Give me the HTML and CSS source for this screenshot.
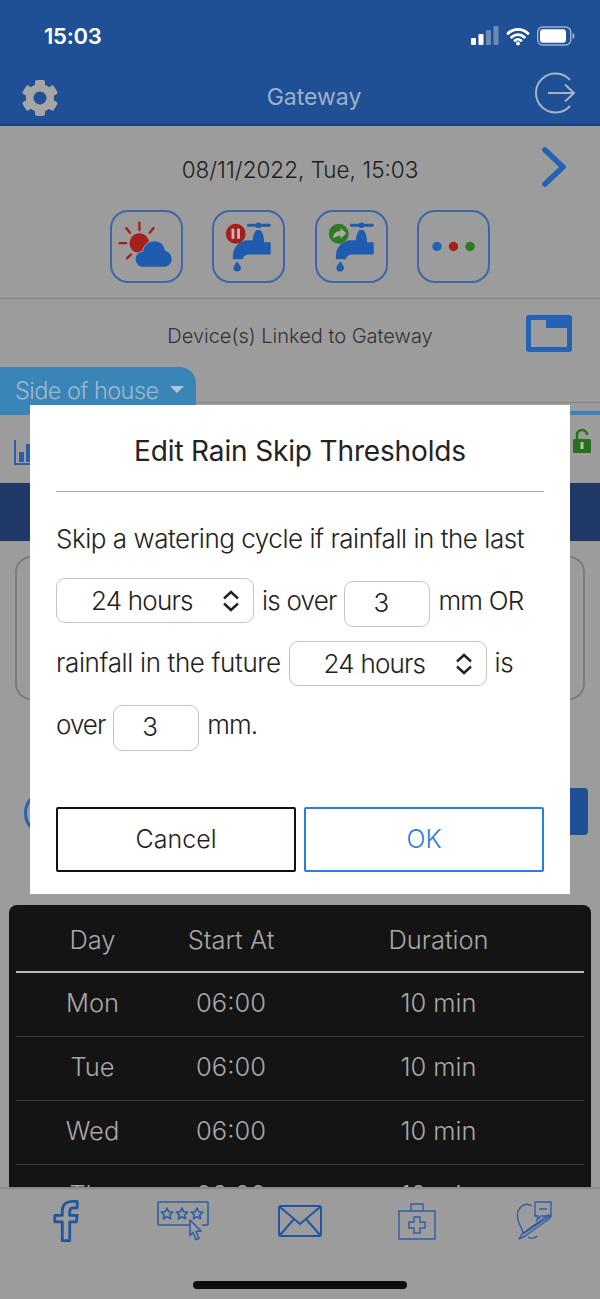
FILE: index.html
```html
<!DOCTYPE html>
<html lang="en">
<head>
    <meta charset="UTF-8">
    <meta name="viewport" content="width=device-width, initial-scale=1.0">
    <title>Gateway</title>
    <link rel="stylesheet" href="styles.css">
</head>
<body>
<div class="phone">
    <header class="app-header">
        <div class="status-bar">
            <span class="clock">15:03</span>
            <div class="status-icons">
                <svg width="28" height="20" viewBox="0 0 28 20">
                    <rect x="0" y="12" width="5" height="7" rx="1" fill="#fff"/>
                    <rect x="7.5" y="8" width="5" height="11" rx="1" fill="#fff"/>
                    <rect x="15" y="4" width="5" height="15" rx="1" fill="#6c8ab8"/>
                    <rect x="22.5" y="0" width="5" height="19" rx="1" fill="#6c8ab8"/>
                </svg>
                <svg width="24" height="20" viewBox="0 0 24 20">
                    <path d="M2 7.5a14 14 0 0 1 20 0M5.6 11.2a9 9 0 0 1 12.8 0M9 14.6a4.300 4.300 0 0 1 6 0" fill="none" stroke="#fff" stroke-width="2.800" stroke-linecap="round"/>
                    <circle cx="12" cy="17.500" r="2" fill="#fff"/>
                </svg>
                <svg width="38" height="20" viewBox="0 0 38 20">
                    <rect x="0.700" y="1" width="33" height="18" rx="5" fill="none" stroke="#9fb4d2" stroke-width="1.400"/>
                    <rect x="3" y="3.300" width="26" height="13.400" rx="3" fill="#fff"/>
                    <path d="M35.500 7v6c1.400-.4 2-1.600 2-3s-.6-2.600-2-3z" fill="#9fb4d2"/>
                </svg>
            </div>
        </div>
        <div class="nav-bar">
            <svg class="nav-gear" width="36" height="36" viewBox="0 0 36 36">
                <g fill="#a6a6a6">
                    <rect x="13" y="0" width="10" height="36" rx="2"/>
                    <rect x="13" y="0" width="10" height="36" rx="2" transform="rotate(60 18 18)"/>
                    <rect x="13" y="0" width="10" height="36" rx="2" transform="rotate(120 18 18)"/>
                </g>
                <circle cx="18" cy="18" r="10.500" fill="none" stroke="#a6a6a6" stroke-width="7"/>
                <circle cx="18" cy="18" r="6.500" fill="#1f5096"/>
            </svg>
            <span class="nav-title">Gateway</span>
            <svg class="nav-exit" width="42" height="44" viewBox="0 0 42 44">
                <path d="M36 9A19.500 19.500 0 1 0 36 35" fill="none" stroke="#a8b2c2" stroke-width="2"/>
                <path d="M14 22H40M31 13.500l9 8.500-9 8.500" fill="none" stroke="#a8b2c2" stroke-width="2"/>
            </svg>
        </div>
    </header>

    <section class="date-row">
        <span class="date-text">08/11/2022, Tue, 15:03</span>
        <svg class="date-next" width="26" height="42" viewBox="0 0 26 42">
            <path d="M4 4l18 17L4 38" fill="none" stroke="#2462b4" stroke-width="5.500" stroke-linecap="round" stroke-linejoin="round"/>
        </svg>
    </section>

    <section class="quick-actions">
        <button class="quick-btn">
            <svg width="73" height="73" viewBox="0 0 73 73">
                <g stroke="#a5201c" stroke-width="2.500" stroke-linecap="round">
                    <path d="M29 11v8M8 33h7M15 17l4 5M44 17l-4 5M16 49l4-4"/>
                </g>
                <circle cx="29" cy="33" r="10.500" fill="#a5201c"/>
                <path d="M33 58c-5 0-8-4-8-8 0-5 4-8 8-8 0-6 6-11 12-11s10 4 11 10c4 1 7 4 7 9s-4 8-8 8z" fill="#1f5cb0" stroke="#9c9c9c" stroke-width="2" paint-order="stroke"/>
            </svg>
        </button>
        <button class="quick-btn">
            <svg width="73" height="73" viewBox="0 0 73 73">
                <use href="#tap"/>
                <circle cx="23" cy="23" r="10.500" fill="#a5201c"/>
                <rect x="18.500" y="17.500" width="3" height="11" rx="1" fill="#bbb"/>
                <rect x="24.500" y="17.500" width="3" height="11" rx="1" fill="#bbb"/>
            </svg>
        </button>
        <button class="quick-btn">
            <svg width="73" height="73" viewBox="0 0 73 73">
                <use href="#tap"/>
                <circle cx="23" cy="23" r="10.500" fill="#2f7a25"/>
                <path d="M17 28c0-5 3-8 8-8v-3l6 5.500-6 5.500v-3c-3 0-5 1-8 3z" fill="#aaa"/>
            </svg>
        </button>
        <button class="quick-btn">
            <svg width="73" height="73" viewBox="0 0 73 73">
                <circle cx="19" cy="36.500" r="5" fill="#2462b4"/>
                <circle cx="36.500" cy="36.500" r="5" fill="#a5201c"/>
                <circle cx="54" cy="36.500" r="5" fill="#2f7a25"/>
            </svg>
        </button>
    </section>

    <section class="linked-row">
        <span class="linked-text">Device(s) Linked to Gateway</span>
        <svg class="linked-folder" width="46" height="38" viewBox="0 0 46 38">
            <path d="M3 1h40a3 3 0 0 1 3 3v31a3 3 0 0 1-3 3H3a3 3 0 0 1-3-3V4a3 3 0 0 1 3-3z" fill="#2462b4"/>
            <path d="M5 6h15v8h21v19H5z" fill="#9c9c9c"/>
        </svg>
    </section>

    <div class="tab-row">
        <div class="device-tab">Side of house <span class="tab-caret"></span></div>
    </div>

    <div class="tool-row">
        <svg class="tool-chart" width="18" height="28" viewBox="0 0 18 28">
            <path d="M1 2v24h16" fill="none" stroke="#2a5ea8" stroke-width="2"/>
            <rect x="5" y="14" width="5" height="10" fill="#2a5ea8"/>
            <rect x="12" y="6" width="5" height="18" fill="#2a5ea8"/>
        </svg>
        <svg width="20" height="26" viewBox="0 0 20 26">
            <path d="M5 11V7a5 5 0 0 1 10 0" fill="none" stroke="#26701f" stroke-width="2.500"/>
            <rect x="1" y="11" width="18" height="14" rx="1.500" fill="#26701f"/>
            <rect x="8.500" y="14" width="3" height="7" fill="#a9c5a4"/>
        </svg>
    </div>

    <div class="banner"></div>

    <div class="outline-card"></div>

    <div class="program-row">
        <span class="program-circle"></span>
        <span class="program-btn"></span>
    </div>

    <section class="schedule">
        <table class="schedule-table">
            <thead>
                <tr><th class="col-day">Day</th><th class="col-start">Start At</th><th>Duration</th></tr>
            </thead>
            <tbody>
                <tr><td>Mon</td><td>06:00</td><td>10 min</td></tr>
                <tr><td>Tue</td><td>06:00</td><td>10 min</td></tr>
                <tr><td>Wed</td><td>06:00</td><td>10 min</td></tr>
                <tr><td>Thu</td><td>06:00</td><td>10 min</td></tr>
            </tbody>
        </table>
    </section>

    <footer class="tab-bar">
        <div class="tab-icons">
            <svg width="28" height="46" viewBox="0 0 30 46">
                <path d="M11 44V24H3v-7h8v-5C11 5 16 2 22 2h5v7h-4c-3 0-4 1-4 4v4h8l-1 7h-7v20z" fill="none" stroke="#1f55a3" stroke-width="3" stroke-linejoin="round"/>
            </svg>
            <svg width="52" height="40" viewBox="0 0 52 40">
                <path d="M33 24H2a1 1 0 0 1-1-1V2a1 1 0 0 1 1-1h48a1 1 0 0 1 1 1v21a1 1 0 0 1-1 1h-5" fill="none" stroke="#2e5ea6" stroke-width="1.600"/>
                <g fill="none" stroke="#2e5ea6" stroke-width="1.600" stroke-linejoin="round">
                    <path d="M10 6l1.700 3.700 4 .4-3 2.700.9 4-3.600-2.100-3.600 2.100.9-4-3-2.700 4-.4z" transform="translate(0 1)"/>
                    <path d="M25 6l1.700 3.700 4 .4-3 2.700.9 4-3.600-2.100-3.600 2.100.9-4-3-2.700 4-.4z" transform="translate(0 1)"/>
                    <path d="M40 6l1.700 3.700 4 .4-3 2.700.9 4-3.600-2.100-3.600 2.100.9-4-3-2.700 4-.4z" transform="translate(0 1)"/>
                </g>
                <path d="M33 19l11 11-5 .5 3 7-3 1-3-7-3 3z" fill="#9c9c9c" stroke="#2e5ea6" stroke-width="1.600" stroke-linejoin="round"/>
            </svg>
            <svg width="44" height="32" viewBox="0 0 44 32">
                <rect x="1" y="1" width="42" height="30" rx="2" fill="none" stroke="#1f55a3" stroke-width="2"/>
                <path d="M2 2l20 17L42 2M2 30l14-16M42 30L28 14" fill="none" stroke="#1f55a3" stroke-width="2"/>
            </svg>
            <svg width="38" height="38" viewBox="0 0 38 38">
                <path d="M1 9h36v28H1zM13 9V2h12v7" fill="none" stroke="#2e5ea6" stroke-width="1.400"/>
                <path d="M16 15h6v5h5v6h-5v5h-6v-5h-5v-6h5z" fill="none" stroke="#2e5ea6" stroke-width="1.400"/>
            </svg>
            <svg width="36" height="40" viewBox="0 0 36 40">
                <path d="M6 5c-4 3-6 9-3 17 2 5 4 7 4 11M6 5c3-2 7-2 10 0M7 33l27-18M3 38l6-3 24-17 2-3-3-1-26 19z" fill="none" stroke="#2e5ea6" stroke-width="1.400" stroke-linejoin="round"/>
                <path d="M19 1h16v14H25l-4 4 1-4h-3zM23 8h8" fill="none" stroke="#2e5ea6" stroke-width="1.400"/>
                <path d="M12 36c3 2 6 2 9-1" fill="none" stroke="#2e5ea6" stroke-width="1.400"/>
            </svg>
        </div>
        <div class="home-indicator"></div>
    </footer>

    <div class="modal">
        <h2 class="modal-title">Edit Rain Skip Thresholds</h2>
        <form class="modal-body">
            <div class="form-line line-intro">Skip a watering cycle if rainfall in the last</div>
            <div class="form-line line-past">
                <div class="select-box">
                    <select><option>24 hours</option></select>
                    <svg class="select-arrows" width="18" height="22" viewBox="0 0 18 22"><path d="M2 8.500L9 2l7 6.500M2 13.500L9 20l7-6.500" fill="none" stroke="#222" stroke-width="2.400"/></svg>
                </div>
                <span>is over</span>
                <input class="num-input" type="text" value="3">
                <span>mm OR</span>
            </div>
            <div class="form-line line-future">
                <span>rainfall in the future</span>
                <div class="select-box">
                    <select><option>24 hours</option></select>
                    <svg class="select-arrows" width="18" height="22" viewBox="0 0 18 22"><path d="M2 8.500L9 2l7 6.500M2 13.500L9 20l7-6.500" fill="none" stroke="#222" stroke-width="2.400"/></svg>
                </div>
                <span>is</span>
            </div>
            <div class="form-line line-over">
                <span>over</span>
                <input class="num-input" type="text" value="3">
                <span>mm.</span>
            </div>
            <div class="modal-actions">
                <button type="button" class="btn-cancel">Cancel</button>
                <button type="button" class="btn-ok">OK</button>
            </div>
        </form>
    </div>

    <svg class="defs" width="0" height="0">
        <defs>
            <g id="tap" fill="#1f5cb0">
                <rect x="35" y="12.500" width="25" height="3" rx="1"/>
                <circle cx="47" cy="14" r="3"/>
                <path d="M60 32v13H37c-3 0-6 2-6 4v1H20v-3c0-10 7-17 16-17h5c0-5 2-9 4-11h4c2 2 4 6 4 13h7z"/>
                <path d="M24.500 52c2 3 4 5 4 7a4 4 0 0 1-8 0c0-2 2-4 4-7z"/>
            </g>
        </defs>
    </svg>
</div>
</body>
</html>
```

FILE: styles.css
```css
* {
    box-sizing: border-box;
}

body {
    margin: 0;
    font-family: 'Inter', 'Roboto', sans-serif;
    background: #9c9c9c;
}

.phone {
    position: relative;
    width: 600px;
    height: 1299px;
    overflow: hidden;
    display: flex;
    flex-direction: column;
    background: #9c9c9c;
}

.defs {
    position: absolute;
}

/* header */
.app-header {
    height: 126px;
    flex: none;
    background: #1f5096;
    border-bottom: 2px solid #1a437f;
}

.status-bar {
    height: 70px;
    display: flex;
    justify-content: space-between;
    align-items: center;
    padding: 2px 25px 0 44px;
}

.clock {
    color: #fff;
    font-size: 22px;
    font-weight: 600;
    letter-spacing: -0.2px;
}

.status-icons {
    display: flex;
    align-items: center;
    gap: 7px;
}

.nav-bar {
    display: flex;
    justify-content: space-between;
    align-items: center;
    padding: 0 24px 0 22px;
    height: 54px;
}

.nav-gear {
    margin-top: 2px;
}

.nav-title {
    color: #9fb0c8;
    font-size: 23px;
    margin-left: 36px;
}

.nav-exit {
    margin-top: -8px;
}

/* date */
.date-row {
    height: 84px;
    flex: none;
    display: flex;
    align-items: center;
    justify-content: center;
    padding-top: 2px;
    position: relative;
}

.date-text {
    font-size: 22.500px;
    font-weight: 300;
    color: #1e1e1e;
}

.date-next {
    position: absolute;
    right: 33px;
    top: 20px;
}

.quick-actions {
    height: 89px;
    flex: none;
    display: flex;
    gap: 29.400px;
    padding-left: 110px;
    border-bottom: 1px solid #848484;
}

.quick-btn {
    width: 73px;
    height: 73px;
    padding: 0;
    background: transparent;
    border: 2px solid #3d67a6;
    border-radius: 18px;
    display: flex;
    align-items: center;
    justify-content: center;
}

.linked-row {
    height: 68px;
    flex: none;
    display: flex;
    align-items: center;
    justify-content: center;
    padding-top: 6px;
    position: relative;
}

.linked-text {
    font-size: 20px;
    font-weight: 300;
    color: #333;
}

.linked-folder {
    position: absolute;
    right: 28px;
    top: 15px;
}

.tab-row {
    height: 48px;
    flex: none;
    border-bottom: 4px solid #3a85b8;
    background: linear-gradient(#848484, #848484) no-repeat 0 35px / 100% 1px;
}

.device-tab {
    width: 196px;
    height: 44px;
    background: #3a85b8;
    border-radius: 0 16px 0 0;
    padding: 9px 0 0 15px;
    color: #9fb8ca;
    font-size: 23.500px;
    font-weight: 300;
    letter-spacing: -0.55px;
    white-space: nowrap;
}

.tab-caret {
    display: inline-block;
    margin-left: 5px;
    vertical-align: 6px;
    border-left: 7px solid transparent;
    border-right: 7px solid transparent;
    border-top: 7px solid #b0c4d3;
}

.tool-row {
    height: 68px;
    flex: none;
    display: flex;
    justify-content: space-between;
    align-items: flex-start;
    padding: 13px 8px 0 14px;
}

.tool-chart {
    margin-top: 10px;
}

.banner {
    height: 58px;
    flex: none;
    background: #1f3868;
}

.outline-card {
    height: 144px;
    flex: none;
    margin: 15px 15px 0;
    border: 2px solid #7c7c7c;
    border-radius: 16px;
}

.program-row {
    height: 205px;
    flex: none;
    display: flex;
    justify-content: space-between;
    align-items: flex-start;
    padding: 88px 12px 0 24px;
}

.program-circle {
    width: 46px;
    height: 46px;
    margin-top: 2px;
    border: 3px solid #2462b4;
    border-radius: 50%;
}

.program-btn {
    width: 120px;
    height: 47px;
    background: #1f5096;
    border-radius: 4px;
}

/* schedule table */
.schedule {
    flex: 1;
    min-height: 0;
    overflow: hidden;
    margin: 0 9px;
    padding: 3px 7px 0;
    background: #141414;
    border-radius: 8px 8px 0 0;
}

.schedule-table {
    width: 100%;
    border-collapse: collapse;
    table-layout: fixed;
    color: #a8a8a8;
    font-size: 25.500px;
    font-weight: 300;
    text-align: center;
}

.schedule-table th {
    height: 64px;
    padding: 0;
    font-weight: 300;
    border-bottom: 2px solid #bbb;
}

.schedule-table td {
    height: 64px;
    padding: 0 0 3px;
    border-bottom: 1px solid #383838;
}

.col-day {
    width: 153px;
}

.col-start {
    width: 124px;
}

/* bottom tabs */
.tab-bar {
    height: 112px;
    flex: none;
    border-top: 2px solid #888;
    display: flex;
    flex-direction: column;
    position: relative;
}

.tab-icons {
    display: grid;
    grid-template-columns: repeat(5, 117px);
    justify-items: center;
    align-items: center;
    padding: 9px 0 0 7px;
}

.home-indicator {
    width: 214px;
    height: 8px;
    margin: 37px auto 0;
    background: #0c0c0c;
    border-radius: 4px;
}

/* dialog */
.modal {
    position: absolute;
    left: 30px;
    top: 405px;
    width: 540px;
    height: 489px;
    background: #fff;
    padding: 0 26px;
    color: #222;
    font-size: 26px;
    font-weight: 300;
    letter-spacing: -0.47px;
}

.modal-title {
    height: 87px;
    margin: 0;
    padding-top: 27px;
    text-align: center;
    font-size: 28px;
    font-weight: 400;
    letter-spacing: -0.15px;
    line-height: 38px;
    color: #222;
    border-bottom: 1px solid #aaa;
}

.form-line {
    display: flex;
    align-items: center;
    gap: 8px;
    white-space: nowrap;
}

.line-intro {
    height: 34px;
    margin-top: 29px;
}

.line-past {
    height: 49px;
    margin-top: 23px;
}

.line-past span {
    margin-bottom: 4px;
    letter-spacing: -0.8px;
}

.line-past .select-box {
    align-self: flex-start;
}

.line-past .num-input {
    align-self: flex-end;
}

.line-future {
    height: 46px;
    margin-top: 13px;
}

.line-future span {
    margin-bottom: 2px;
    letter-spacing: -0.37px;
}

.line-over {
    height: 46px;
    margin-top: 19px;
}

.line-over span {
    margin-bottom: 7px;
    letter-spacing: -1px;
}

.select-box {
    position: relative;
    width: 198px;
    height: 45px;
}

.select-box select {
    width: 100%;
    height: 100%;
    appearance: none;
    background: #fff;
    border: 1px solid #c4c4c4;
    border-radius: 9px;
    padding: 0 0 0 34px;
    font: inherit;
    letter-spacing: -0.8px;
    color: #222;
}

.select-arrows {
    position: absolute;
    right: 14px;
    top: 12px;
}

.num-input {
    width: 86px;
    height: 46px;
    border: 1px solid #c4c4c4;
    border-radius: 9px;
    padding: 0 0 4px 28px;
    font: inherit;
    color: #222;
}

.modal-actions {
    display: flex;
    gap: 8px;
    margin-top: 56px;
}

.modal-actions button {
    width: 240px;
    height: 65px;
    padding: 0 0 2px;
    background: #fff;
    border-radius: 2px;
    font: inherit;
    font-size: 25px;
}

.btn-cancel {
    border: 2px solid #111;
    color: #222;
}

.btn-ok {
    border: 2px solid #2a7de1;
    color: #2a7de1;
}
```
